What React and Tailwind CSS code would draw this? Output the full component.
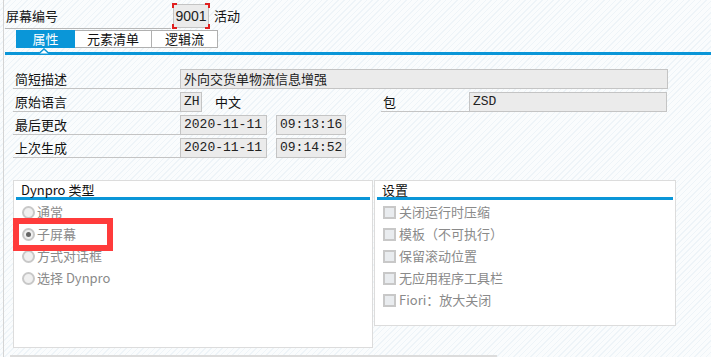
import React from "react";

const cjk = "font-['SimSun','Noto_Sans_CJK_SC',sans-serif]";
const mono = "font-['Liberation_Mono','Noto_Sans_CJK_SC',monospace]";

function Field({ w, children, className = "" }) {
  return (
    <div
      className={`h-[20px] ${w} bg-[#ebebeb] border border-[#c4c4c4] flex items-center px-[3px] text-[13px] text-[#222] ${className}`}
    >
      {children}
    </div>
  );
}

function Label({ children }) {
  return (
    <div className="w-[167px] h-[20px] ml-[8px] border-b border-[#c4c4c4] flex items-end pl-[2px] text-[13px] text-[#111] leading-[18px]">
      {children}
    </div>
  );
}

function Radio({ checked, label }) {
  return (
    <div className="h-[22px] flex items-center gap-[2px] text-[13px] text-[#8a8a8a]">
      <span className="w-[13px] h-[13px] rounded-full border-2 border-[#c8c8c8] bg-[#f0f0f0] flex items-center justify-center">
        {checked && <span className="w-[5px] h-[5px] rounded-full bg-[#666]" />}
      </span>
      <span>{label}</span>
    </div>
  );
}

function Check({ label }) {
  return (
    <div className="h-[22px] flex items-center gap-[3px] text-[13px] text-[#8a8a8a]">
      <span className="w-[13px] h-[13px] border-2 border-[#c8c8c8] bg-[#e9ecef]" />
      <span>{label}</span>
    </div>
  );
}

function Group({ title, w, h, children }) {
  return (
    <div className={`${w} ${h} bg-white border border-[#dcdcdc] px-[2px] pt-[2px]`}>
      <div className="h-[14px] pl-[5px] text-[13px] leading-[14px] text-[#111]">{title}</div>
      <div className="h-[3px] bg-[#0a96d8]" />
      <div className="pl-[6px] pt-[1px]">{children}</div>
    </div>
  );
}

export default function App() {
  return (
    <div
      className={`w-[711px] h-[357px] overflow-hidden relative ${cjk} bg-[repeating-linear-gradient(135deg,#fafcfd_0px,#fafcfd_3px,#eef4f8_3px,#eef4f8_4px)]`}
    >
      <div className="flex h-full">
        <div className="w-[3px] shrink-0" />
        <div className="w-px shrink-0 bg-[#d4d4d4]" />
        <div className="w-px shrink-0" />
        <div className="flex-1 flex flex-col">
          {/* header */}
          <div className="h-[29px] flex items-end">
            <div className="w-[166px] h-[23px] border-b border-[#b8b8b8] pl-[1px] text-[13px] leading-[20px] text-[#111]">
              屏幕编号
            </div>
            <div className="relative ml-[2px] mb-[1px] w-[36px] h-[24px] bg-[#ebebeb] border border-[#c4c4c4] flex items-center justify-center text-[14px] text-[#222] font-['Liberation_Sans',sans-serif]">
              9001
              <span className="absolute -left-[2px] -top-[2px] w-[5px] h-[5px] border-l-2 border-t-2 border-[#e02020]" />
              <span className="absolute -right-[2px] -top-[2px] w-[5px] h-[5px] border-r-2 border-t-2 border-[#e02020]" />
              <span className="absolute -left-[2px] -bottom-[2px] w-[5px] h-[5px] border-l-2 border-b-2 border-[#e02020]" />
              <span className="absolute -right-[2px] -bottom-[2px] w-[5px] h-[5px] border-r-2 border-b-2 border-[#e02020]" />
            </div>
            <div className="ml-[5px] mb-[4px] text-[13px] text-[#111]">活动</div>
          </div>

          {/* tabs */}
          <div className="flex ml-[11px] mt-[1px] h-[18px] text-[13px]">
            <div className="w-[59px] bg-[#0a96d8] text-white flex items-center justify-center">属性</div>
            <div className="w-[77px] bg-white border border-[#b0b0b0] border-l-0 flex items-center justify-center text-[#111]">元素清单</div>
            <div className="w-[66px] bg-white border border-[#b0b0b0] border-l-0 flex items-center justify-center text-[#111]">逻辑流</div>
          </div>
          <div className="relative mt-[4px] h-[3px] bg-[#0a96d8]">
            <svg className="absolute left-[34px] -top-[4px]" width="10" height="6" viewBox="0 0 10 6">
              <path d="M0 5.5 L5 1 L10 5.5" fill="white" stroke="#0a96d8" strokeWidth="1.5" />
            </svg>
          </div>

          {/* form rows */}
          <div className="mt-[13px] flex flex-col gap-[2px]">
            <div className="flex items-end h-[21px]">
              <Label>简短描述</Label>
              <Field w="w-[488px]">外向交货单物流信息增强</Field>
            </div>
            <div className="flex items-end h-[21px]">
              <Label>原始语言</Label>
              <Field w="w-[22px]" className={`${mono} text-[12px]`}>ZH</Field>
              <div className="ml-[13px] w-[166px] text-[13px] text-[#111] leading-[20px]">中文</div>
              <div className="w-[88px] h-[20px] border-b border-[#c4c4c4] text-[13px] text-[#111] leading-[20px] pl-[2px]">包</div>
              <Field w="w-[198px]" className={`${mono} text-[12px]`}>ZSD</Field>
            </div>
            <div className="flex items-end h-[21px]">
              <Label>最后更改</Label>
              <Field w="w-[87px]" className={`${mono} text-[13.5px]`}>2020-11-11</Field>
              <Field w="w-[70px]" className={`${mono} text-[13.5px] ml-[9px]`}>09:13:16</Field>
            </div>
            <div className="flex items-end h-[21px]">
              <Label>上次生成</Label>
              <Field w="w-[87px]" className={`${mono} text-[13.5px]`}>2020-11-11</Field>
              <Field w="w-[70px]" className={`${mono} text-[13.5px] ml-[9px]`}>09:14:52</Field>
            </div>
          </div>

          {/* groups */}
          <div className="mt-[22px] ml-[8px] flex items-start gap-px">
            <Group title={<span>Dynpro 类型</span>} w="w-[360px]" h="h-[168px]">
              <Radio label="通常" />
              <Radio checked label="子屏幕" />
              <Radio label="方式对话框" />
              <Radio label="选择 Dynpro" />
            </Group>
            <Group title="设置" w="w-[302px]" h="h-[146px]">
              <Check label="关闭运行时压缩" />
              <Check label="模板（不可执行）" />
              <Check label="保留滚动位置" />
              <Check label="无应用程序工具栏" />
              <Check label="Fiori：放大关闭" />
            </Group>
          </div>
        </div>
      </div>

      {/* highlight overlay */}
      <div className="absolute left-[13px] top-[218px] w-[100px] h-[33px] border-[6px] border-[#ff3b3b]" />
      <div className="absolute left-[10px] top-[355px] w-[487px] h-[2px] bg-[#dcdcdc]" />
    </div>
  );
}
